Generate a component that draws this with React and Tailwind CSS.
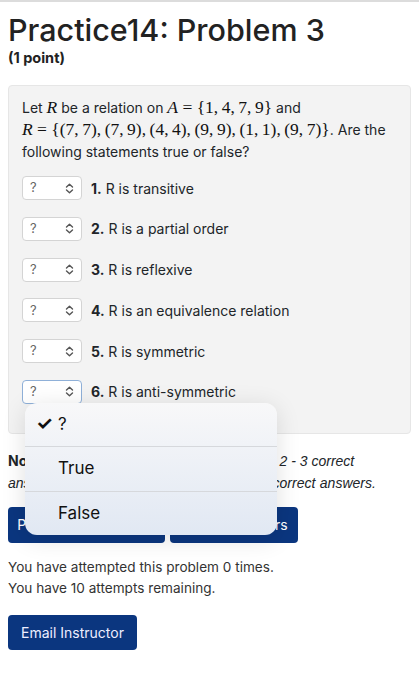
import React from "react";

const Chev = () => (
  <svg width="9" height="11" viewBox="0 0 9 11" fill="none" stroke="#555" strokeWidth="1.4" strokeLinecap="round" strokeLinejoin="round">
    <path d="M1.5 4 L4.5 1.2 L7.5 4" />
    <path d="M1.5 7 L4.5 9.8 L7.5 7" />
  </svg>
);

const Sel = ({ focus }) => (
  <div
    className={
      "w-[60px] h-[24px] shrink-0 bg-white rounded-[4px] border flex items-center justify-between pl-[7px] pr-[7px] " +
      (focus ? "border-[#8fb0d8]" : "border-[#d4d4d4]")
    }
  >
    <span className="text-[13px] text-[#666]">?</span>
    <Chev />
  </div>
);

const items = [
  ["1.", "R is transitive"],
  ["2.", "R is a partial order"],
  ["3.", "R is reflexive"],
  ["4.", "R is an equivalence relation"],
  ["5.", "R is symmetric"],
  ["6.", "R is anti-symmetric"],
];

const M = ({ children }) => (
  <span className="text-[17.5px] leading-[0] text-[#111]" style={{ fontFamily: '"Liberation Serif", "DejaVu Serif", serif' }}>
    {children}
  </span>
);
const I = ({ children }) => <i>{children}</i>;
const It = ({ children, cls = "" }) => (
  <i className={cls} style={{ fontFamily: '"Liberation Sans", Arial, sans-serif' }}>{children}</i>
);

export default function App() {
  return (
    <div className="relative w-[419px] h-[700px] bg-white text-[#212529] overflow-hidden" style={{ fontFamily: 'Inter, "Noto Sans", sans-serif' }}>
      <div className="h-[2px] bg-[#dcdcdc]" />
      <div className="px-[8px]">
        <h1 className="mt-[10px] text-[30.5px] leading-[36px] font-medium text-[#222]">Practice14: Problem 3</h1>
        <div className="mt-[1px] text-[14.5px] leading-[18px] font-bold text-[#222]">(1 point)</div>

        <div className="mt-[18px] bg-[#f3f3f3] border border-[#e6e6e6] rounded-[4px] pl-[13px] pr-[10px] pt-[11px] pb-[29px]">
          <div className="text-[14px] leading-[22px]">
            Let <M><I>R</I></M> be a relation on <M><I>A</I> = {"{"}1,&thinsp;4,&thinsp;7,&thinsp;9{"}"}</M> and
            <br />
            <M>
              <I>R</I> = {"{"}(7,&thinsp;7),&thinsp;(7,&thinsp;9),&thinsp;(4,&thinsp;4),&thinsp;(9,&thinsp;9),&thinsp;(1,&thinsp;1),&thinsp;(9,&thinsp;7){"}"}
            </M>
            . Are the
            <br />
            following statements true or false?
          </div>
          <div className="mt-[13px] flex flex-col gap-[16.8px]">
            {items.map(([n, t], i) => (
              <div key={n} className="flex items-center gap-[9px] h-[24px]">
                <Sel focus={i === 5} />
                <span className="text-[14px]">
                  <b>{n}</b> {t}
                </span>
              </div>
            ))}
          </div>
        </div>

        <div className="mt-[16px] text-[14px] leading-[21px]">
          <b>Note:</b>{" "}
          <It>You can earn a 50% partial credit for 2 - 3 correct</It>
          <br />
          <It cls="[word-spacing:0.6px]">answers, and 100% partial credit for 4 - 6 correct answers.</It>
        </div>

        <div className="mt-[13px] flex gap-[5px]">
          <button className="h-[36px] w-[157px] rounded-[4px] bg-[#0b367f] text-white text-[14px]">Preview My Answers</button>
          <button className="h-[36px] w-[128px] rounded-[4px] bg-[#0b367f] text-white text-[14px]">Submit Answers</button>
        </div>

        <div className="mt-[14px] text-[13.6px] leading-[21px] text-[#333]">
          You have attempted this problem 0 times.
          <br />
          You have 10 attempts remaining.
        </div>

        <button className="mt-[16px] h-[35px] px-[13px] rounded-[4px] bg-[#0b367f] text-[#eef] text-[14px]">Email Instructor</button>
      </div>

      <div className="absolute left-[25px] top-[403px] w-[252px] rounded-[12px] overflow-hidden shadow-[0_4px_24px_rgba(0,0,0,0.12)] bg-gradient-to-b from-[#f8f8f9] to-[#e1e8f3] text-[17px] text-[#111]">
        <div className="h-[44px] flex items-center pl-[11px] border-b border-[#d6d8dc]">
          <span className="w-[22px] text-[19px] font-bold">✓</span>
          <span>?</span>
        </div>
        <div className="h-[45px] flex items-center pl-[33px] border-b border-[#d6d8dc]">True</div>
        <div className="h-[43px] flex items-center pl-[33px]">False</div>
      </div>
    </div>
  );
}
